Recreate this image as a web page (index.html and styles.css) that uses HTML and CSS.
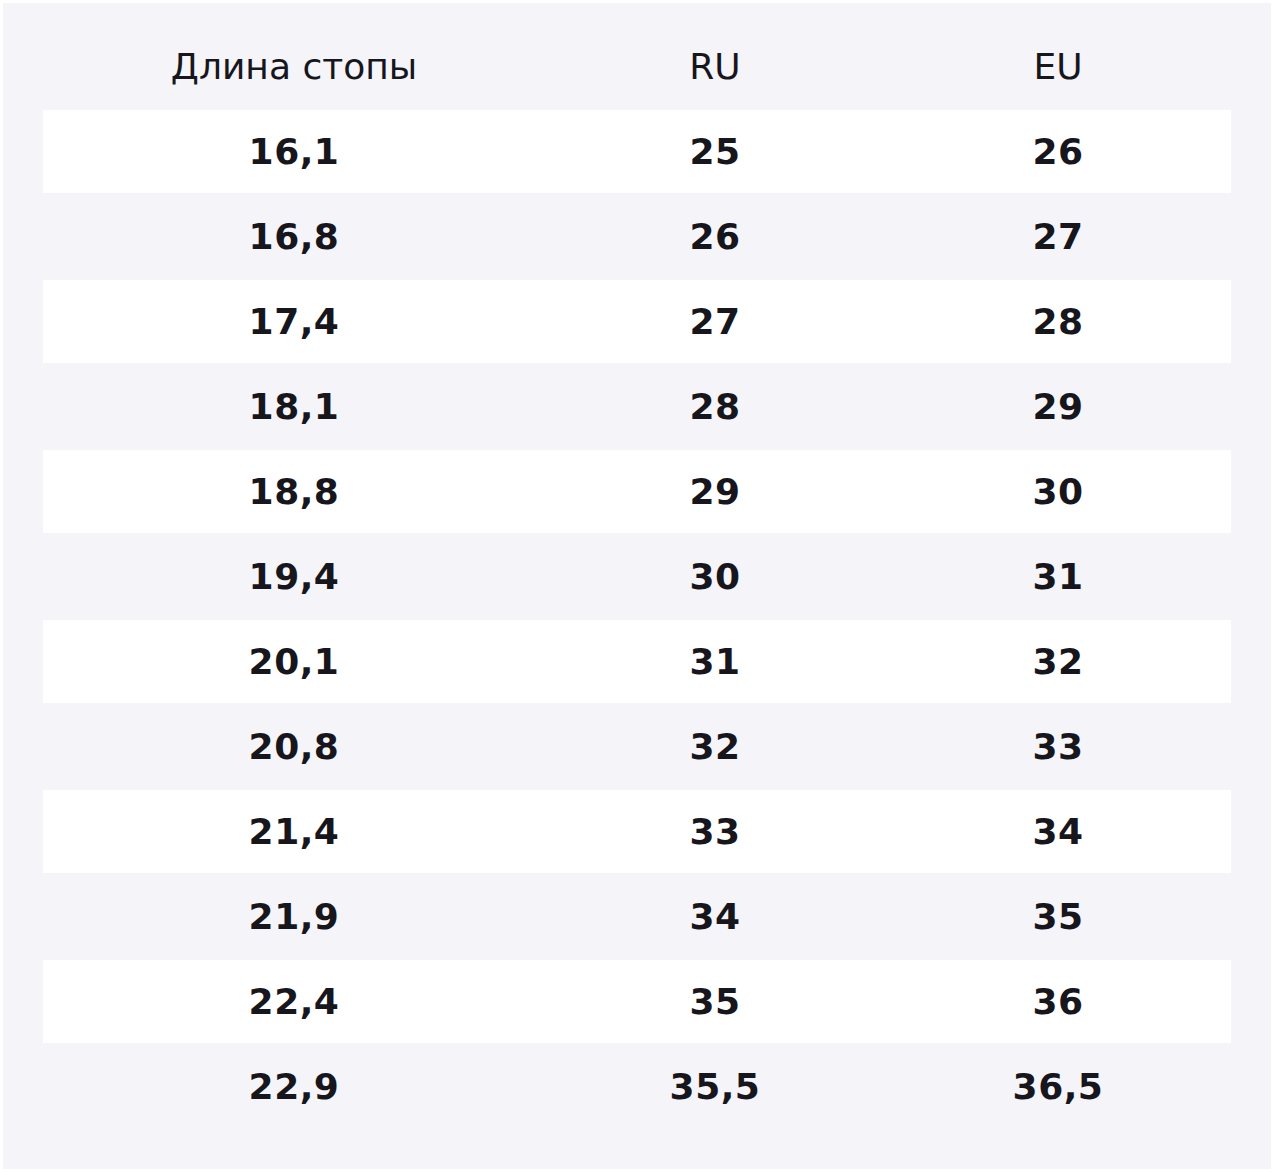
FILE: index.html
```html
<!DOCTYPE html>
<html lang="ru">
<head>
<meta charset="utf-8">
<link rel="stylesheet" href="styles.css">
</head>
<body>
<div class="panel">
  <div class="table">
    <div class="row head"><div>Длина стопы</div><div>RU</div><div>EU</div></div>
    <div class="row odd"><div>16,1</div><div>25</div><div>26</div></div>
    <div class="row even"><div>16,8</div><div>26</div><div>27</div></div>
    <div class="row odd"><div>17,4</div><div>27</div><div>28</div></div>
    <div class="row even"><div>18,1</div><div>28</div><div>29</div></div>
    <div class="row odd"><div>18,8</div><div>29</div><div>30</div></div>
    <div class="row even"><div>19,4</div><div>30</div><div>31</div></div>
    <div class="row odd"><div>20,1</div><div>31</div><div>32</div></div>
    <div class="row even"><div>20,8</div><div>32</div><div>33</div></div>
    <div class="row odd"><div>21,4</div><div>33</div><div>34</div></div>
    <div class="row even"><div>21,9</div><div>34</div><div>35</div></div>
    <div class="row odd"><div>22,4</div><div>35</div><div>36</div></div>
    <div class="row even"><div>22,9</div><div>35,5</div><div>36,5</div></div>
  </div>
</div>
</body>
</html>
```
FILE: styles.css
```css
html, body { margin: 0; padding: 0; background: #ffffff; }
body { padding: 3px; font-family: "DejaVu Sans", "Liberation Sans", sans-serif; color: #16161c; }
.panel {
  width: 1268px;
  height: 1166px;
  box-sizing: border-box;
  background: #f4f4f9;
  padding: 40px 40px 0 40px;
}
.table { display: flex; flex-direction: column; }
.row {
  display: grid;
  grid-template-columns: 502px 340px 346px;
  align-items: center;
  text-align: center;
  font-size: 36px;
  font-weight: bold;
  letter-spacing: 0.5px;
}
.row.head { height: 67px; font-weight: normal; align-items: start; letter-spacing: 0; }
.row.head > div { padding-top: 3px; }
.row.odd { height: 83px; background: #ffffff; }
.row.even { height: 87px; }
```
